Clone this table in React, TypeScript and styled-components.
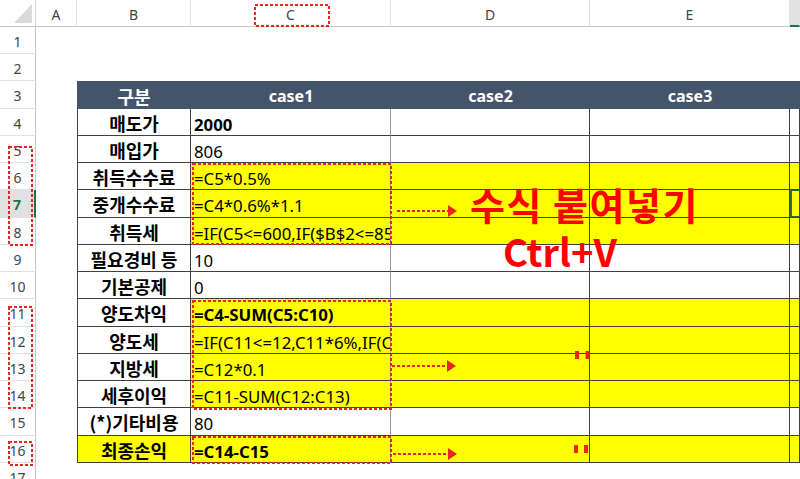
import React from 'react';
import styled, { createGlobalStyle, css } from 'styled-components';

const GlobalStyle = createGlobalStyle`
  html, body { margin: 0; padding: 0; background: #ffffff; }
  body {
    width: 800px;
    height: 479px;
    overflow: hidden;
    font-family: "Noto Sans", "Noto Sans CJK KR", sans-serif;
  }
`;

const GREEN = '#217346';
const LINE = '#404040';
const RED = '#e8261f';
const KR = '"Noto Sans CJK KR", "Noto Sans", sans-serif';
const ROW_HEIGHTS = [27, 27, 28, 27, 27, 27, 28, 27, 27, 27, 28, 27, 27, 27, 28, 27, 27];

const Stage = styled.div`
  position: relative;
  width: 800px;
  height: 479px;
  overflow: hidden;
`;

const Sheet = styled.div`
  display: grid;
  grid-template-columns: 36px 41px 114px 200px 199px 200px 10px;
  grid-template-rows: 27px ${ROW_HEIGHTS.map((h) => `${h}px`).join(' ')};
`;

const Corner = styled.div`
  position: relative;
  box-sizing: border-box;
  border-right: 1px solid #d4d4d4;
  border-bottom: 1px solid #c6c6c6;
  &::after {
    content: '';
    position: absolute;
    right: 3px;
    bottom: 3px;
    width: 18px;
    height: 19px;
    background: #dadada;
    clip-path: polygon(100% 0, 100% 100%, 0 100%);
  }
`;

const ColHead = styled.div<{ $active?: boolean }>`
  box-sizing: border-box;
  display: flex;
  align-items: center;
  justify-content: center;
  padding-top: 2px;
  font-size: 14px;
  color: #444;
  border-right: 1px solid #e1e1e1;
  border-bottom: 1px solid #c6c6c6;
  ${({ $active }) =>
    $active &&
    css`
      background: #e1e1e1;
      border-bottom: 2px solid ${GREEN};
    `}
`;

const RowHead = styled.div<{ $active?: boolean }>`
  box-sizing: border-box;
  display: flex;
  align-items: center;
  justify-content: center;
  padding-top: 2px;
  font-size: 14px;
  color: #444;
  border-right: 1px solid #c6c6c6;
  border-bottom: 1px solid #e1e1e1;
  ${({ $active }) =>
    $active &&
    css`
      background: #e1e1e1;
      color: ${GREEN};
      font-weight: 700;
      border-right: 2px solid ${GREEN};
    `}
`;

const Blank = styled.div``;

const HeadCell = styled.div<{ $korean?: boolean }>`
  display: flex;
  align-items: center;
  justify-content: center;
  padding-top: 1px;
  background: #44546a;
  color: #ffffff;
  font-weight: 700;
  white-space: nowrap;
  overflow: hidden;
  font-family: ${({ $korean }) => ($korean ? KR : '"Noto Sans", sans-serif')};
  font-size: ${({ $korean }) => ($korean ? '18px' : '16px')};
  line-height: 20px;
`;

const LabelCell = styled.div<{ $fill?: boolean }>`
  box-sizing: border-box;
  display: flex;
  align-items: center;
  justify-content: center;
  padding-top: 1px;
  font-family: ${KR};
  font-size: 18px;
  line-height: 20px;
  font-weight: 700;
  color: #000;
  white-space: nowrap;
  background: ${({ $fill }) => ($fill ? '#ffff00' : '#ffffff')};
  border-left: 1px solid ${LINE};
  border-right: 1px solid ${LINE};
  border-bottom: 1px solid ${LINE};
`;

const ValueCell = styled.div<{ $fill?: boolean; $bold?: boolean; $soft?: boolean; $selected?: boolean }>`
  box-sizing: border-box;
  display: flex;
  align-items: center;
  padding: 5px 0 0 3px;
  font-size: 16.8px;
  line-height: 20px;
  font-weight: ${({ $bold }) => ($bold ? 700 : 400)};
  color: #000;
  white-space: nowrap;
  overflow: hidden;
  background: ${({ $fill }) => ($fill ? '#ffff00' : '#ffffff')};
  border-right: 1px solid ${({ $soft }) => ($soft ? '#9a9a9a' : LINE)};
  border-bottom: 1px solid ${LINE};
  ${({ $selected }) =>
    $selected &&
    css`
      box-shadow: inset 2px 1px 0 ${GREEN}, inset 0 -1px 0 ${GREEN};
    `}
`;

const Marks = styled.svg`
  position: absolute;
  left: 0;
  top: 0;
  pointer-events: none;
`;

const Callout = styled.div<{ $x: number; $y: number; $size: number; $track?: number }>`
  position: absolute;
  left: ${({ $x }) => $x}px;
  top: ${({ $y }) => $y}px;
  font-family: ${KR};
  font-weight: 700;
  font-size: ${({ $size }) => $size}px;
  letter-spacing: ${({ $track }) => $track ?? 0}px;
  line-height: 1;
  color: #ff0000;
  white-space: nowrap;
`;

type Row = { n: number; label: string; value: string; fill?: boolean; bold?: boolean; labelFill?: boolean };

const TABLE: Row[] = [
  { n: 4, label: '매도가', value: '2000', bold: true },
  { n: 5, label: '매입가', value: '806' },
  { n: 6, label: '취득수수료', value: '=C5*0.5%', fill: true },
  { n: 7, label: '중개수수료', value: '=C4*0.6%*1.1', fill: true },
  { n: 8, label: '취득세', value: '=IF(C5<=600,IF($B$2<=85,C5*1.1%,C5*1.3%),C5*3.3%)', fill: true },
  { n: 9, label: '필요경비 등', value: '10' },
  { n: 10, label: '기본공제', value: '0' },
  { n: 11, label: '양도차익', value: '=C4-SUM(C5:C10)', fill: true, bold: true },
  { n: 12, label: '양도세', value: '=IF(C11<=12,C11*6%,IF(C11<=46,C11*15%-1.08,C11*24%-5.22))', fill: true },
  { n: 13, label: '지방세', value: '=C12*0.1', fill: true },
  { n: 14, label: '세후이익', value: '=C11-SUM(C12:C13)', fill: true },
  { n: 15, label: '(*)기타비용', value: '80' },
  { n: 16, label: '최종손익', value: '=C14-C15', fill: true, bold: true, labelFill: true },
];

const COLS = ['A', 'B', 'C', 'D', 'E', 'F'];
const ACTIVE_ROW = 7;

export default function App() {
  return (
    <Stage>
      <GlobalStyle />
      <Sheet>
        <Corner />
        {COLS.map((c) => (
          <ColHead key={c} $active={c === 'F'}>
            {c === 'F' ? '' : c}
          </ColHead>
        ))}

        {[1, 2].map((n) => (
          <React.Fragment key={n}>
            <RowHead>{n}</RowHead>
            {COLS.map((c) => (
              <Blank key={c} />
            ))}
          </React.Fragment>
        ))}

        <RowHead>3</RowHead>
        <Blank />
        <HeadCell $korean>구분</HeadCell>
        <HeadCell>case1</HeadCell>
        <HeadCell>case2</HeadCell>
        <HeadCell>case3</HeadCell>
        <HeadCell />

        {TABLE.map((r) => (
          <React.Fragment key={r.n}>
            <RowHead $active={r.n === ACTIVE_ROW}>{r.n}</RowHead>
            <Blank />
            <LabelCell $fill={r.labelFill}>{r.label}</LabelCell>
            <ValueCell $fill={r.fill} $bold={r.bold} $soft>
              {r.value}
            </ValueCell>
            <ValueCell $fill={r.fill} />
            <ValueCell $fill={r.fill} />
            <ValueCell $fill={r.fill} $selected={r.n === ACTIVE_ROW} />
          </React.Fragment>
        ))}

        <RowHead>17</RowHead>
        {COLS.map((c) => (
          <Blank key={c} />
        ))}
      </Sheet>

      <Marks width={800} height={479} viewBox="0 0 800 479">
        <g fill="none" stroke={RED} strokeWidth={2} strokeDasharray="3 2">
          <rect x={255} y={5} width={74} height={21} />
          <rect x={9} y={147} width={23} height={98} />
          <rect x={9} y={307} width={23} height={101} />
          <rect x={9} y={442} width={23} height={23} />
          <rect x={193} y={164} width={198} height={80} />
          <rect x={193} y={301} width={198} height={108} />
          <rect x={193} y={437} width={198} height={26} />
          <line x1={397} y1={211} x2={449} y2={211} />
          <line x1={392} y1={366} x2={448} y2={366} />
          <line x1={393} y1={454} x2={449} y2={454} />
        </g>
        <g fill={RED}>
          <polygon points="448,205 457,211 448,217" />
          <polygon points="447,360 456,366 447,372" />
          <polygon points="448,448 457,454 448,460" />
          <rect x={575} y={351} width={4} height={8} />
          <rect x={585.5} y={351} width={4} height={8} />
          <rect x={574} y={445} width={4} height={8} />
          <rect x={584} y={445} width={4} height={8} />
        </g>
      </Marks>

      <Callout $x={470} $y={185} $size={38} $track={1.5}>
        수식 붙여넣기
      </Callout>
      <Callout $x={503} $y={232} $size={38}>
        Ctrl+V
      </Callout>
    </Stage>
  );
}
